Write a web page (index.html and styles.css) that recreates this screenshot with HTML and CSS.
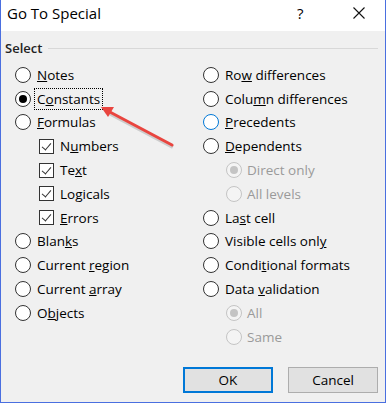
FILE: index.html
```html
<!DOCTYPE html>
<html lang="en">

<head>
  <meta charset="UTF-8" />
  <title>Go To Special</title>
  <link rel="stylesheet" href="styles.css">
</head>

<body>
  <div class="dialog">
    <div class="titlebar">
      <span class="title">Go To Special</span>
      <span class="help">?</span>
      <svg class="close" width="12" height="12" viewBox="0 0 12 12">
        <path d="M0.5 0.5 L11.5 11.5 M11.5 0.5 L0.5 11.5" stroke="#111" stroke-width="1.1" fill="none" />
      </svg>
    </div>

    <div class="group">
      <div class="group-head">
        <span class="group-label">Select</span>
        <span class="group-line"></span>
      </div>

      <div class="columns">
        <div class="col">
          <div class="row"><span class="radio"></span><span><u>N</u>otes</span></div>
          <div class="row"><span class="radio checked"></span><span class="focus">C<u>o</u>nstants</span></div>
          <div class="row"><span class="radio"></span><span><u>F</u>ormulas</span></div>
          <div class="row sub"><span class="check"></span><span>N<u>u</u>mbers</span></div>
          <div class="row sub"><span class="check"></span><span>Te<u>x</u>t</span></div>
          <div class="row sub"><span class="check"></span><span>Lo<u>g</u>icals</span></div>
          <div class="row sub"><span class="check"></span><span><u>E</u>rrors</span></div>
          <div class="row"><span class="radio"></span><span>Blan<u>k</u>s</span></div>
          <div class="row"><span class="radio"></span><span>Current <u>r</u>egion</span></div>
          <div class="row"><span class="radio"></span><span>Current <u>a</u>rray</span></div>
          <div class="row"><span class="radio"></span><span>O<u>b</u>jects</span></div>
        </div>

        <div class="col">
          <div class="row"><span class="radio"></span><span>Ro<u>w</u> differences</span></div>
          <div class="row"><span class="radio"></span><span>Colu<u>m</u>n differences</span></div>
          <div class="row"><span class="radio hover"></span><span><u>P</u>recedents</span></div>
          <div class="row"><span class="radio"></span><span><u>D</u>ependents</span></div>
          <div class="row sub-radio disabled"><span class="radio checked"></span><span>Direct only</span></div>
          <div class="row sub-radio disabled"><span class="radio"></span><span>All levels</span></div>
          <div class="row"><span class="radio"></span><span>La<u>s</u>t cell</span></div>
          <div class="row"><span class="radio"></span><span>Visible cells onl<u>y</u></span></div>
          <div class="row"><span class="radio"></span><span>Condi<u>t</u>ional formats</span></div>
          <div class="row"><span class="radio"></span><span>Data <u>v</u>alidation</span></div>
          <div class="row sub-radio disabled"><span class="radio checked"></span><span>All</span></div>
          <div class="row sub-radio disabled"><span class="radio"></span><span>Same</span></div>
        </div>
      </div>
    </div>

    <div class="buttons">
      <button class="btn default">OK</button>
      <button class="btn">Cancel</button>
    </div>

    <!-- annotation arrow pointing at Constants -->
    <svg class="arrow" width="386" height="403" viewBox="0 0 386 403">
      <line x1="172" y1="145" x2="108" y2="111" stroke="rgba(0,0,0,0.15)" stroke-width="4" transform="translate(1,2)" />
      <line x1="172" y1="145" x2="108" y2="111" stroke="#e9453f" stroke-width="3" stroke-linecap="round" />
      <polygon points="101,107 114,107 108,117" fill="#e9453f" />
    </svg>
  </div>
</body>

</html>
```

FILE: styles.css
```css
html,
body {
  margin: 0;
  padding: 0;
}

body {
  font-family: "Open Sans", "Noto Sans", sans-serif;
  font-size: 13.5px;
  color: #000;
}

.dialog {
  position: relative;
  width: 386px;
  height: 403px;
  box-sizing: border-box;
  border: 1px solid #4a6fe0;
  border-top: none;
  background: #f0f0f0;
  display: flex;
  flex-direction: column;
}

.titlebar {
  height: 31px;
  background: #fff;
  display: flex;
  align-items: center;
  padding-left: 6px;
}

.title {
  font-size: 15px;
  flex: 1;
  margin-top: -6px;
}

.help {
  font-size: 15px;
  width: 12px;
  margin-right: 44px;
  margin-top: -6px;
}

.close {
  margin-right: 20px;
  margin-top: -6px;
}

.group {
  padding: 10px 4px 0 4px;
}

.group-head {
  display: flex;
  align-items: center;
  height: 14px;
}

.group-label {
  font-size: 13px;
  font-weight: 600;
  color: #222;
  margin-right: 6px;
}

.group-line {
  flex: 1;
  height: 1px;
  background: #d8d8d8;
  margin-right: 3px;
}

.columns {
  display: flex;
  padding-left: 10px;
  margin-top: 8px;
}

.col {
  display: flex;
  flex-direction: column;
}

.col:first-child {
  width: 188px;
}

.row {
  height: 23.8px;
  display: flex;
  align-items: center;
  gap: 6px;
  white-space: nowrap;
}

.row.sub {
  padding-left: 24px;
  gap: 6px;
}

.row.sub-radio {
  padding-left: 23px;
  gap: 5px;
}

.radio {
  width: 16px;
  height: 16px;
  box-sizing: border-box;
  border: 1px solid #333;
  border-radius: 50%;
  background: #fff;
  display: flex;
  align-items: center;
  justify-content: center;
  flex-shrink: 0;
}

.radio.checked::after {
  content: "";
  width: 8px;
  height: 8px;
  border-radius: 50%;
  background: #000;
}

.radio.hover {
  border-color: #0078d7;
}

.disabled {
  color: #9a9a9a;
}

.disabled .radio {
  border-color: #c4c4c4;
  background: #f4f4f4;
}

.disabled .radio.checked::after {
  background: #c4c4c4;
}

.check {
  width: 15px;
  height: 15px;
  box-sizing: border-box;
  border: 1px solid #333;
  background: #fff;
  flex-shrink: 0;
  position: relative;
}

.check::after {
  content: "";
  position: absolute;
  left: 4px;
  top: 1px;
  width: 4px;
  height: 8px;
  border: solid #333;
  border-width: 0 1px 1px 0;
  transform: rotate(40deg);
}

.focus {
  outline: 1px dotted #000;
  padding: 1px 2px;
  margin-left: -2px;
}

.buttons {
  margin-top: auto;
  display: flex;
  justify-content: flex-end;
  gap: 15px;
  padding: 0 7px 9px 0;
}

.btn {
  width: 90px;
  height: 26px;
  font-family: inherit;
  font-size: 13.5px;
  background: #e1e1e1;
  border: 1px solid #adadad;
  padding: 0;
}

.btn.default {
  border: 2px solid #0078d7;
}

.arrow {
  position: absolute;
  left: -1px;
  top: 0;
  pointer-events: none;
}
```
